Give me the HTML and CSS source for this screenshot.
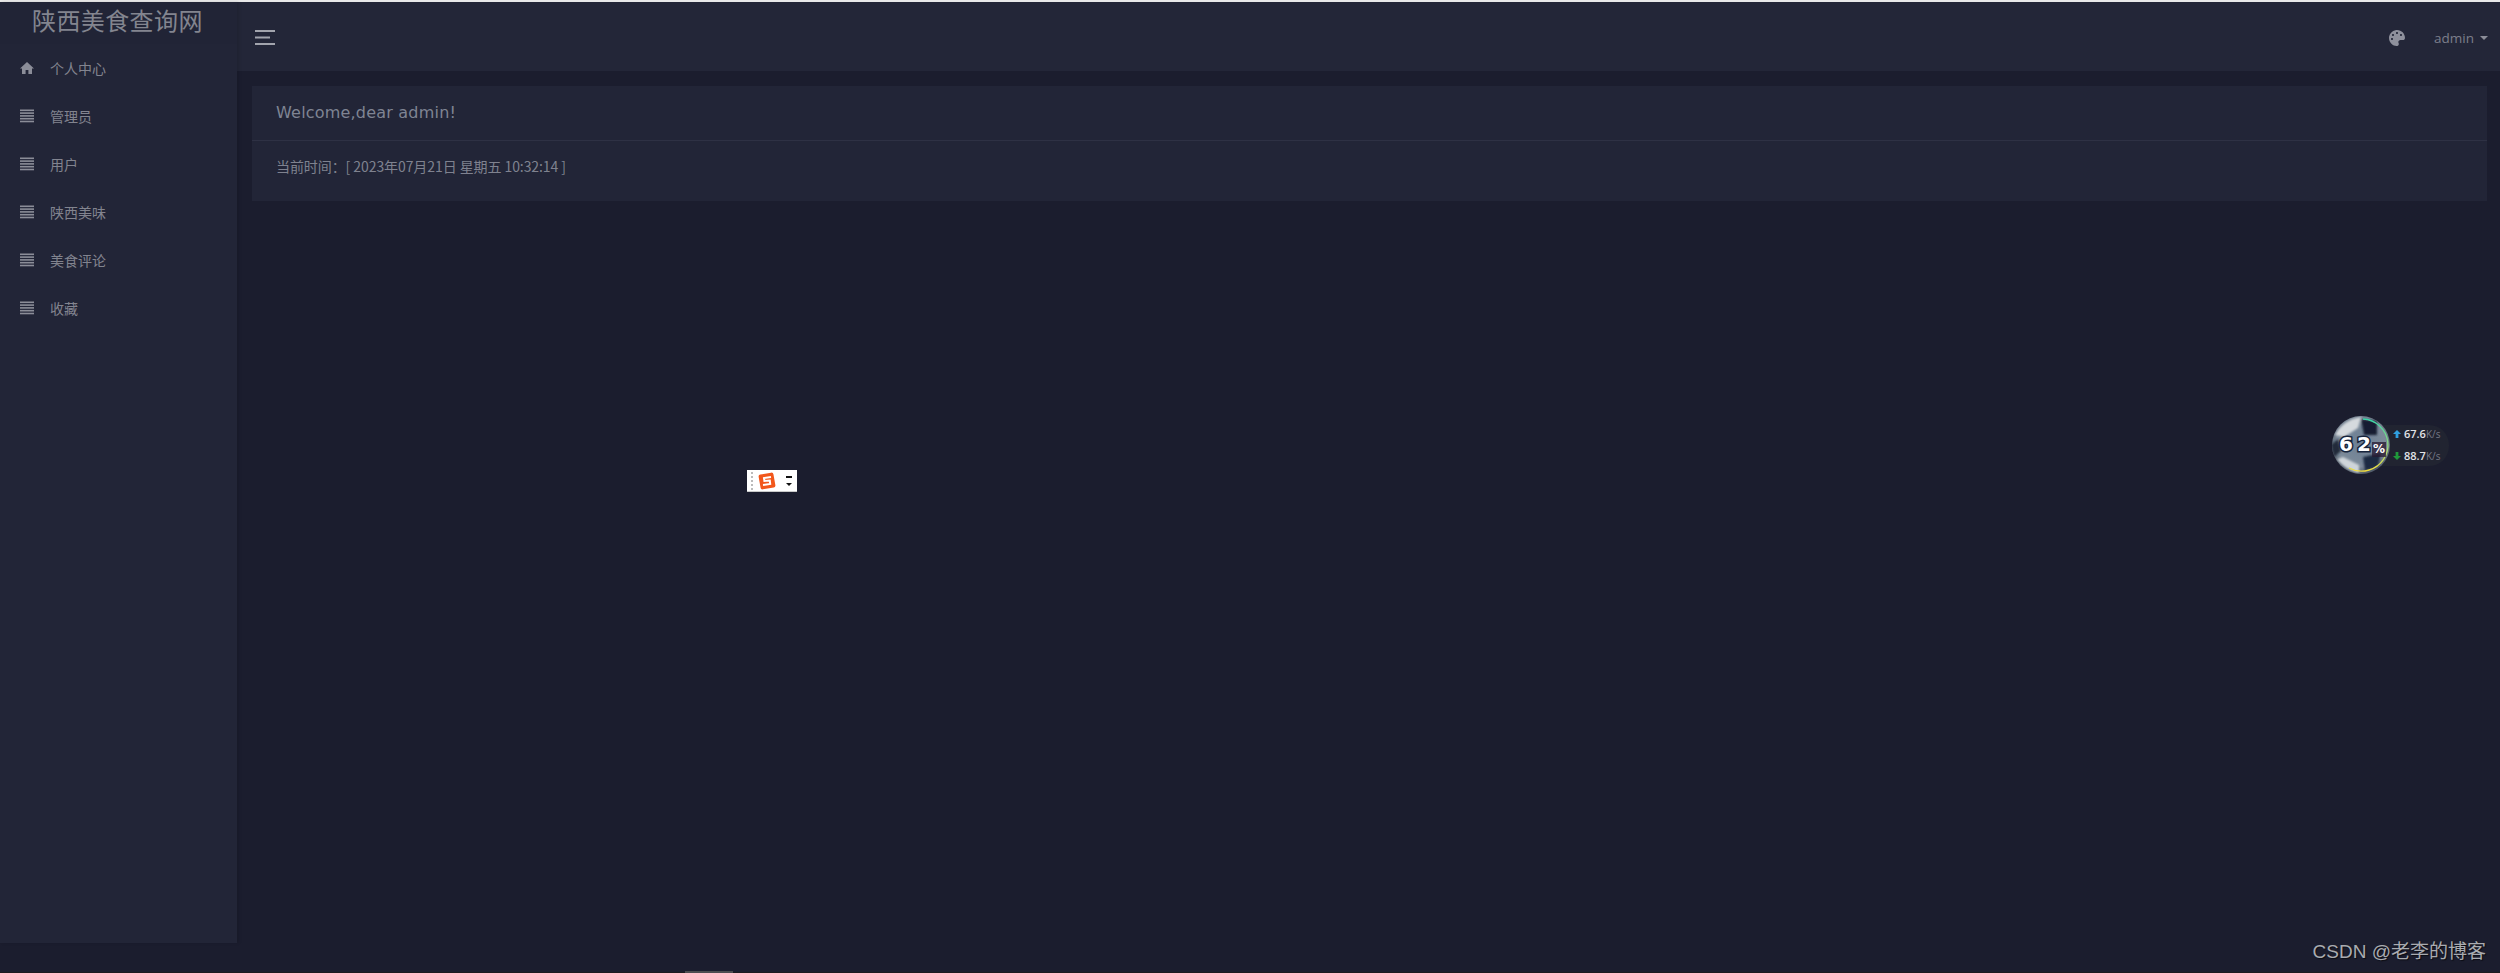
FILE: index.html
```html
<!DOCTYPE html>
<html lang="zh-CN">
<head>
<meta charset="UTF-8">
<title>陕西美食查询网</title>
<link rel="stylesheet" href="styles.css">
</head>
<body>
<div class="page">
  <div class="layout">
    <aside class="sidebar">
      <div class="logo">陕西美食查询网</div>
      <ul class="menu">
        <li class="menu-item">
          <svg class="menu-icon" viewBox="0 0 14 14"><path d="M7 1 L0 7.4 H2 V13 H5.6 V9 H8.4 V13 H12 V7.4 H14 Z"/></svg>
          <span>个人中心</span>
        </li>
        <li class="menu-item">
          <svg class="menu-icon" viewBox="0 0 14 14"><use href="#lines"/></svg>
          <span>管理员</span>
        </li>
        <li class="menu-item">
          <svg class="menu-icon" viewBox="0 0 14 14"><use href="#lines"/></svg>
          <span>用户</span>
        </li>
        <li class="menu-item">
          <svg class="menu-icon" viewBox="0 0 14 14"><use href="#lines"/></svg>
          <span>陕西美味</span>
        </li>
        <li class="menu-item">
          <svg class="menu-icon" viewBox="0 0 14 14"><use href="#lines"/></svg>
          <span>美食评论</span>
        </li>
        <li class="menu-item">
          <svg class="menu-icon" viewBox="0 0 14 14"><use href="#lines"/></svg>
          <span>收藏</span>
        </li>
      </ul>
    </aside>
    <div class="main">
      <header class="topbar">
        <svg class="toggle" viewBox="0 0 20 15"><path d="M0 1 H20 M0 7.5 H15 M0 14 H20"/></svg>
        <div class="topbar-right">
          <svg class="palette" viewBox="0 0 512 512"><path d="M204.3 5C104.9 24.4 24.8 104.3 5.2 203.4c-37 187 131.7 326.4 258.8 306.7 41.2-6.4 61.4-54.6 42.5-91.7-23.1-45.4 9.9-98.4 60.9-98.4h79.7c35.8 0 64.8-29.6 64.9-65.3C511.5 97.1 368.1-26.9 204.3 5zM96 320c-17.7 0-32-14.3-32-32s14.3-32 32-32 32 14.3 32 32-14.3 32-32 32zm32-128c-17.7 0-32-14.3-32-32s14.3-32 32-32 32 14.3 32 32-14.3 32-32 32zm128-64c-17.7 0-32-14.3-32-32s14.3-32 32-32 32 14.3 32 32-14.3 32-32 32zm128 64c-17.7 0-32-14.3-32-32s14.3-32 32-32 32 14.3 32 32-14.3 32-32 32z"/></svg>
          <span class="user">admin</span>
          <span class="caret"></span>
        </div>
      </header>
      <div class="content">
        <div class="card">
          <div class="card-header">Welcome,dear admin!</div>
          <div class="card-body">当前时间：[ 2023年07月21日 星期五 10:32:14 ]</div>
        </div>
      </div>
    </div>
  </div>
</div>

<svg class="defs" width="0" height="0">
  <defs>
    <g id="lines">
      <rect x="0" y="0.5" width="14" height="1.6"/>
      <rect x="0" y="3.3" width="14" height="1.6"/>
      <rect x="0" y="6.1" width="14" height="1.6"/>
      <rect x="0" y="8.9" width="14" height="1.6"/>
      <rect x="0" y="11.7" width="14" height="1.6"/>
    </g>
  </defs>
</svg>

<!-- input method bar -->
<div class="ime">
  <span class="ime-grip"></span>
  <svg class="ime-logo" viewBox="0 0 18 18">
    <rect x="1.5" y="1.5" width="15" height="15" rx="2" transform="rotate(-10 9 9)" fill="#f2571b"/>
    <path d="M13 5 L6 6 L6.4 9 L11.8 8.6 L12.2 12 L5 13" fill="none" stroke="#fff" stroke-width="2"/>
  </svg>
  <span class="ime-arrows"><i class="ime-dash"></i><i class="ime-down"></i></span>
</div>

<!-- network speed ball -->
<div class="speed">
  <div class="speed-pill">
    <div class="speed-row"><svg viewBox="0 0 8 8"><path d="M4 0 L8 4 H5.4 V8 H2.6 V4 H0 Z" fill="#2f9fe0"/></svg><b>67.6</b><small>K/s</small></div>
    <div class="speed-row"><svg viewBox="0 0 8 8"><path d="M4 8 L8 4 H5.4 V0 H2.6 V4 H0 Z" fill="#1f9a3a"/></svg><b>88.7</b><small>K/s</small></div>
  </div>
  <div class="speed-ball">
    <svg viewBox="0 0 60 60">
      <defs>
        <radialGradient id="ballFill" cx="50%" cy="45%" r="60%">
          <stop offset="0" stop-color="#6b7e93"/>
          <stop offset="0.7" stop-color="#7d8b9a"/>
          <stop offset="1" stop-color="#3f4753"/>
        </radialGradient>
        <linearGradient id="ringFill" x1="0" y1="0" x2="0" y2="1">
          <stop offset="0" stop-color="#39d3a8"/>
          <stop offset="0.55" stop-color="#9adf7a"/>
          <stop offset="1" stop-color="#f0dc3c"/>
        </linearGradient>
        <filter id="soft"><feGaussianBlur stdDeviation="1.2"/></filter>
        <clipPath id="ballClip"><circle cx="30" cy="30" r="29"/></clipPath>
      </defs>
      <circle cx="30" cy="30" r="29" fill="url(#ballFill)"/>
      <g clip-path="url(#ballClip)" filter="url(#soft)">
        <path d="M4 20 Q12 5 30 2 L27 13 L13 22 Z" fill="#d5dade"/>
        <path d="M30 4 L46 6 L46 20 L33 20 Z" fill="#141e30"/>
        <path d="M0 30 L7 24 L10 36 L3 42 Z" fill="#20293a"/>
        <path d="M32 42 L50 38 L47 52 L34 56 Z" fill="#1f2c42"/>
        <path d="M6 44 Q14 55 28 58 L28 50 L12 42 Z" fill="#cfd5da"/>
      </g>
      <path d="M32 4 A26 26 0 0 1 38 55 A26 26 0 0 1 18 53" fill="none" stroke="url(#ringFill)" stroke-width="1.3"/>
    </svg>
    <span class="speed-num">62</span><span class="speed-unit">%</span>
  </div>
</div>

<div class="watermark">CSDN @老李的博客</div>
<div class="taskbar-tab"></div>
</body>
</html>
```

FILE: styles.css
```css
*{
  box-sizing: border-box;
}
html, body{
  margin: 0;
  padding: 0;
  height: 100%;
  overflow: hidden;
}
body{
  background: #1b1d2e;
  color: #8b8d9a;
  font-family: "Open Sans", "Noto Sans CJK SC", sans-serif;
  font-size: 14px;
  position: relative;
}
.defs{
  position: absolute;
}

.page{
  height: 973px;
  border-top: 2px solid #e9e9e9;
  border-bottom: 1px solid #1c1b1f;
}
.layout{
  display: flex;
  height: 100%;
}

/* left menu */
.sidebar{
  width: 237px;
  height: 941px;
  flex-shrink: 0;
  background: #222537;
  box-shadow: 2px 0 3px rgba(0, 0, 0, 0.12);
  position: relative;
  z-index: 1;
}
.logo{
  height: 42px;
  padding-left: 32px;
  background: #212436;
  font-family: "Noto Sans CJK SC", sans-serif;
  font-size: 24px;
  letter-spacing: 0.4px;
  line-height: 36px;
  color: #83858f;
}
.menu{
  list-style: none;
  margin: 0;
  padding: 0;
}
.menu-item{
  height: 48px;
  display: flex;
  align-items: center;
  gap: 16px;
  padding-left: 20px;
  font-family: "Noto Sans CJK SC", sans-serif;
  font-size: 14px;
  color: #82848f;
}
.menu-icon{
  width: 14px;
  height: 14px;
  fill: #8b8d98;
  flex-shrink: 0;
}

/* top bar */
.main{
  flex: 1;
  min-width: 0;
}
.topbar{
  height: 69px;
  background: #232638;
  display: flex;
  align-items: center;
  justify-content: space-between;
  padding: 0 12px 0 18px;
}
.toggle{
  width: 20px;
  height: 15px;
  margin-top: 2px;
  fill: none;
  stroke: #a2a4ad;
  stroke-width: 2;
}
.topbar-right{
  display: flex;
  align-items: center;
  margin-top: 2px;
}
.palette{
  width: 16px;
  height: 16px;
  fill: #8e909c;
  margin-right: 29px;
}
.user{
  font-size: 13.5px;
  color: #7c7e8b;
}
.caret{
  width: 0;
  height: 0;
  margin-left: 6px;
  border-left: 4px solid transparent;
  border-right: 4px solid transparent;
  border-top: 4px solid #8b8d98;
}

/* welcome card */
.content{
  padding: 15px 13px 0 15px;
}
.card{
  background: #222537;
}
.card-header{
  height: 55px;
  padding-left: 24px;
  border-bottom: 1px solid #2e3144;
  font-family: "DejaVu Sans", sans-serif;
  font-size: 16px;
  letter-spacing: 0.2px;
  line-height: 54px;
  color: #7f8493;
}
.card-body{
  height: 60px;
  padding-left: 24px;
  font-family: "Noto Sans CJK SC", sans-serif;
  font-size: 14px;
  letter-spacing: -0.08px;
  line-height: 50px;
  color: #7f828f;
}

/* overlays */
.ime{
  position: absolute;
  left: 747px;
  top: 470px;
  width: 50px;
  height: 22px;
  background: #fff;
  border-bottom: 1px solid #c9c9c9;
  display: flex;
  align-items: center;
}
.ime-grip{
  width: 2px;
  height: 18px;
  margin-left: 4px;
  background: repeating-linear-gradient(#bbb 0 2px, #fff 2px 4px);
}
.ime-logo{
  width: 18px;
  height: 18px;
  margin-left: 5px;
}
.ime-arrows{
  margin-left: 10px;
  display: flex;
  flex-direction: column;
  align-items: center;
  gap: 5px;
}
.ime-dash{
  width: 6px;
  height: 2px;
  background: #111;
}
.ime-down{
  width: 0;
  height: 0;
  border-left: 3px solid transparent;
  border-right: 3px solid transparent;
  border-top: 3px solid #111;
}

.speed{
  position: absolute;
  left: 2331px;
  top: 415px;
  width: 120px;
  height: 60px;
}
.speed-ball{
  position: absolute;
  left: 0;
  top: 0;
  width: 60px;
  height: 60px;
}
.speed-ball svg{
  display: block;
  width: 60px;
  height: 60px;
}
.speed-num{
  position: absolute;
  left: 8px;
  top: 16px;
  font-family: "DejaVu Sans", sans-serif;
  font-size: 20px;
  font-weight: 700;
  line-height: 26px;
  letter-spacing: 4px;
  color: #fff;
  -webkit-text-stroke: 3px #16243c;
  paint-order: stroke fill;
}
.speed-unit{
  position: absolute;
  left: 41px;
  top: 27px;
  padding: 0 1px;
  font-family: "DejaVu Sans", sans-serif;
  font-size: 12px;
  font-weight: 700;
  line-height: 15px;
  color: #fff;
  background: rgba(40, 25, 50, 0.75);
}
.speed-pill{
  position: absolute;
  left: 50px;
  top: 10px;
  width: 68px;
  height: 41px;
  padding: 0 0 2px 12px;
  border-radius: 0 20px 20px 0;
  background: #212431;
  display: flex;
  flex-direction: column;
  justify-content: center;
}
.speed-row{
  height: 22px;
  flex-shrink: 0;
  display: flex;
  align-items: center;
  font-family: "Open Sans", sans-serif;
  font-size: 11px;
  color: #e3e4e8;
}
.speed-row svg{
  width: 8px;
  height: 8px;
  margin-right: 3px;
}
.speed-row b{
  font-weight: 600;
}
.speed-row small{
  font-size: 10px;
  color: #767986;
}

.watermark{
  position: absolute;
  right: 14px;
  top: 939px;
  font-family: "Liberation Sans", "Noto Sans CJK SC", sans-serif;
  font-size: 19px;
  line-height: 26px;
  color: #a9abb0;
  text-shadow: 1px 1px 1px rgba(0, 0, 0, 0.6);
}
.taskbar-tab{
  position: absolute;
  left: 685px;
  bottom: 0;
  width: 48px;
  height: 2px;
  background: #4c4c50;
}
```
